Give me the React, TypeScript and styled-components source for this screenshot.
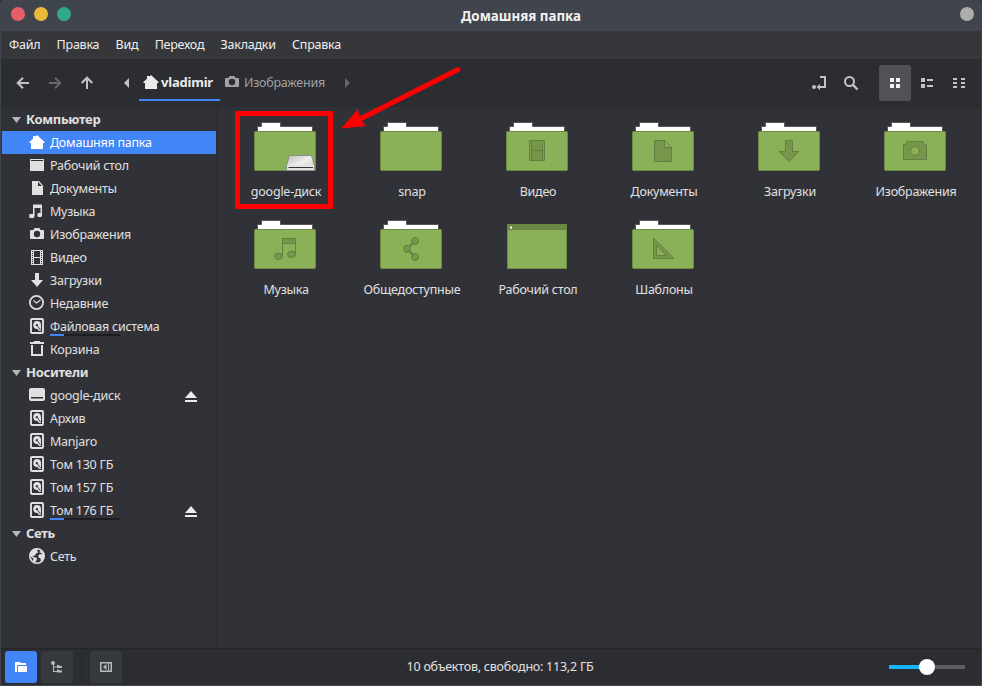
import React from 'react';
import styled, { createGlobalStyle, css } from 'styled-components';

const GlobalStyle = createGlobalStyle`
  * { box-sizing: border-box; }
  html, body { margin: 0; padding: 0; background: #20344f; }
  body { width: 982px; height: 686px; overflow: hidden; }
  svg { display: block; flex: none; }
`;

const Window = styled.div`
  position: relative;
  display: flex;
  flex-direction: column;
  width: 982px;
  height: 686px;
  border: 1px solid #404450;
  border-top: 0;
  border-radius: 4px 4px 0 0;
  overflow: hidden;
  background: #313237;
  color: #e0e0e1;
  font: 12.5px/22px 'Noto Sans', sans-serif;
  letter-spacing: -0.24px;
`;

const TitleBar = styled.header`
  display: flex;
  align-items: center;
  height: 31px;
  flex: none;
  padding: 0 8px 3px 11px;
  margin: 0 -1px;
  background: #40444c;
`;

const Lights = styled.div`
  display: flex;
  gap: 9px;
`;

const Light = styled.i<{ $color: string }>`
  display: block;
  width: 14px;
  height: 14px;
  border-radius: 50%;
  background: ${(p) => p.$color};
`;

const Title = styled.h1`
  flex: 1;
  margin: 3px 0 0;
  padding-left: 11px;
  text-align: center;
  font-size: 13.33px;
  line-height: 22px;
  font-weight: 700;
  letter-spacing: 0;
  color: #f2f2f3;
`;

const MenuBar = styled.nav`
  display: flex;
  align-items: center;
  gap: 16.3px;
  height: 28px;
  flex: none;
  padding: 0 8px 1px;
  background: #36373b;
  color: #eeeeef;
`;

const ToolBar = styled.div`
  display: flex;
  align-items: center;
  height: 48px;
  flex: none;
  padding: 0 6px;
  background: #2c2d32;
  border-bottom: 1px solid #2a2b2f;
`;

const ToolButton = styled.div<{ $active?: boolean; $dim?: boolean }>`
  display: flex;
  align-items: center;
  justify-content: center;
  width: 32px;
  height: 36px;
  border-radius: 3px;
  color: ${(p) => (p.$active ? '#f2f2f2' : p.$dim ? '#66676a' : '#c3c3c5')};
  background: ${(p) => (p.$active ? '#515256' : 'transparent')};
`;

const PathBar = styled.div`
  display: flex;
  align-items: center;
  flex: 1;
  height: 100%;
  padding-left: 21px;
`;

const Crumb = styled.div<{ $current?: boolean }>`
  display: flex;
  align-items: center;
  gap: 4px;
  height: 37px;
  padding: 0 0 1px 4px;
  color: #a0a1a3;
  ${(p) =>
    p.$current
      ? css`
          width: 81px;
          margin: 0 4px 0 10px;
          padding-bottom: 0;
          gap: 2px;
          border-bottom: 2px solid #4285f6;
          color: #eaeaeb;
          font-weight: 700;
          font-size: 13px;
          letter-spacing: -0.2px;
        `
      : css`
          padding-left: 0;
          margin-right: 20px;
          span { margin-top: 2px; }
        `}
`;

const Body = styled.div`
  display: flex;
  flex: 1;
  min-height: 0;
`;

const SideBar = styled.aside`
  width: 217px;
  flex: none;
  padding: 1px 1px 0 1px;
  border-right: 1px solid #242529;
`;

const Section = styled.div`
  display: flex;
  align-items: center;
  gap: 5px;
  height: 23px;
  padding: 0 0 1px 10px;
  font-weight: 700;
  font-size: 13px;
  letter-spacing: -0.3px;
  svg { margin-top: 2px; }
`;

const Place = styled.div<{ $selected?: boolean }>`
  display: flex;
  align-items: center;
  gap: 5px;
  height: 23px;
  padding: 0 19px 1px 27px;
  color: ${(p) => (p.$selected ? '#ffffff' : '#e0e0e1')};
  background: ${(p) => (p.$selected ? '#4285f6' : 'transparent')};
`;

const PlaceName = styled.span`
  position: relative;
  flex: 1;
  margin-top: 2px;
  line-height: 22px;
  white-space: nowrap;
`;

const Usage = styled.i`
  position: absolute;
  left: 0;
  bottom: 2px;
  width: 70px;
  height: 2px;
  background: linear-gradient(90deg, #4285f6 14px, #1d1e21 14px);
`;

const Files = styled.main`
  display: grid;
  grid-template-columns: repeat(6, 126px);
  grid-auto-rows: 98px;
  align-content: start;
  padding: 15px 0 0 5px;
  width: 763px;
`;

const FileItem = styled.div`
  display: flex;
  flex-direction: column;
  align-items: center;
  gap: 9px;
  svg { margin-right: 2px; }
`;

const FileName = styled.span`
  line-height: 23px;
  white-space: nowrap;
`;

const StatusBar = styled.footer`
  display: flex;
  align-items: center;
  height: 37px;
  flex: none;
  padding: 0 16px 0 4px;
  background: #2c2d32;
  border-top: 1px solid #242529;
`;

const StatusButton = styled.div<{ $active?: boolean }>`
  display: flex;
  align-items: center;
  justify-content: center;
  width: 32px;
  height: 32px;
  margin-right: 4px;
  border-radius: 3px;
  background: ${(p) => (p.$active ? '#4285f6' : '#36393e')};
  color: ${(p) => (p.$active ? '#ffffff' : '#b9babc')};
`;

const Divider = styled.i`
  width: 1px;
  height: 32px;
  margin: 0 8px 0 4px;
  background: #26272b;
`;

const StatusText = styled.div`
  flex: 1;
  text-align: center;
  padding: 0 15px 1px 0;
  line-height: 20px;
`;

const Slider = styled.div`
  display: flex;
  align-items: center;
  width: 76px;
  height: 16px;
  background: linear-gradient(90deg, #1bb2fc 38px, #5b5c60 38px) center / 100% 4px no-repeat;
`;

const Knob = styled.i`
  width: 16px;
  height: 16px;
  margin-left: 30px;
  border-radius: 50%;
  background: #ffffff;
`;

const Highlight = styled.div`
  position: absolute;
  left: 234px;
  top: 111px;
  width: 98px;
  height: 98px;
  border: 5px solid #ff0000;
`;

const ArrowSvg = styled.svg`
  position: absolute;
  left: 328px;
  top: 60px;
`;

const EjectSvg = styled.svg`
  margin-top: 2px;
`;

type IconName =
  | 'home' | 'desktop' | 'doc' | 'music' | 'camera' | 'video' | 'download'
  | 'clock' | 'disk' | 'trash' | 'drive' | 'globe';

const iconShapes: Record<IconName, React.ReactNode> = {
  home: <path d="M8 1 15.6 8v1H14v6H2V9H.4V8L4 4.700V2h2.500v.5z" />,
  desktop: <path d="M1 2h14v1H1zM1 4h14v10H1z M1 2h1v3H1zM14 2h1v3h-1z" />,
  doc: <path fillRule="evenodd" d="M3 1h7l4 4.500V15H3zM9 2v4h4z" />,
  music: (
    <>
      <path d="M4 1.500h9V12h-1.500V5h-6v8H4z" />
      <ellipse cx="2.800" cy="13" rx="2.700" ry="2.200" />
      <ellipse cx="10.700" cy="12" rx="2.500" ry="2.200" />
    </>
  ),
  camera: (
    <path fillRule="evenodd" d="M2 4h2.500l1-2h5l1 2H14q1 0 1 1v7q0 1-1 1H2q-1 0-1-1V5q0-1 1-1zM8 4.800a3.200 3.200 0 1 0 0 6.400a3.200 3.200 0 1 0 0-6.400z" />
  ),
  video: (
    <>
      <path fillRule="evenodd" d="M2 1h12v15H2zM5 2v6h6V2zM5 9v6h6V9z" />
      <path d="M3.500 2v13M12.500 2v13" stroke="#313237" strokeDasharray="1 1" fill="none" />
    </>
  ),
  download: <path d="M6 1h4v7h4l-6 7-6-7h4z" />,
  clock: (
    <g fill="none" stroke="currentColor">
      <circle cx="7.500" cy="7.500" r="6.600" strokeWidth="1.800" />
      <path d="m4.500 5.500 3 2.500L11.500 5" strokeWidth="1.200" />
    </g>
  ),
  disk: (
    <>
      <rect x="2" y="1" width="12" height="14" rx="1" fill="none" stroke="currentColor" strokeWidth="1.900" />
      <path fillRule="evenodd" d="M8 3a4 4 0 0 1 4 4v6H10L8.500 11A4 4 0 1 1 8 3zM8 6a1.200 1.200 0 0 0-1 2l1 .3 1-.8A1.200 1.200 0 0 0 8 6z" />
      <path d="m8.500 8 3 4" stroke="#313237" strokeWidth=".9" />
    </>
  ),
  trash: <path fillRule="evenodd" d="M1 1h4V0h6v1h4v2H1zM2 4h12v11H2zM4 4v9h8V4z" />,
  drive: <path fillRule="evenodd" d="M2 1h12q2 0 2 2v9q0 2-2 2H2q-2 0-2-2V3q0-2 2-2zM2 10v1.500h12V10z" />,
  globe: (
    <>
      <circle cx="8" cy="8" r="7.200" fill="none" stroke="currentColor" strokeWidth="1.600" />
      <path d="M1 6 3 2l4-1.500 2 1L8 3l1.500 1.200L7 5.500 6 7.500 3.500 8l2 1.500h2l.5 2-2 3L4 13l.5-2.500L2 9zM11 2.500l3 2L15.500 8 14 12l-2 1.500-.5-3-2-1-.2-2L11 6l2 .5-.5-1.500-2-.5z" />
    </>
  ),
};

const Icon = ({ name, size = 16 }: { name: IconName; size?: number }) => (
  <svg width={size} height={size} viewBox="0 0 16 16" fill="currentColor">
    {iconShapes[name]}
  </svg>
);

const Eject = () => (
  <EjectSvg width="12" height="11" viewBox="0 0 12 11" fill="#ececec">
    <path d="m6 0 6 7H0zM0 9h12v2H0z" />
  </EjectSvg>
);

type FolderKind = 'drive' | 'plain' | 'video' | 'doc' | 'download' | 'camera' | 'music' | 'share' | 'desktop' | 'ruler';

const emblems: Record<FolderKind, React.ReactNode> = {
  plain: null,
  desktop: null,
  drive: (
    <g>
      <path d="M35.500 33.500h22l3 10v4q0 1-1 1H33.500q-1 0-1-1v-4z" fill="url(#metal)" stroke="#8d8d8d" />
      <path d="M33 43.500h27v4.500H33z" fill="#e2e2e2" stroke="none" />
      <path d="M34.500 45.500h24.500" stroke="#333438" />
    </g>
  ),
  video: (
    <>
      <path d="M23.500 18.500h15v20h-15zM25.500 18.500v20M36.500 18.500v20M25.500 28.500h11" />
      <path d="M24.500 20v18M37.500 20v18" stroke="#8ab058" strokeDasharray="1 1" />
    </>
  ),
  doc: (
    <>
      <path d="M22.500 18.500h10l7 7v14h-17z" />
      <path d="M32.500 18.500v7h7z" fill="#8ab058" />
    </>
  ),
  download: <path d="M27.500 18.500h7v11h6.500L31 39.500 21 29.500h6.500z" />,
  camera: (
    <>
      <path d="M19.500 22.500H22l1-3h16l1 3h2.500v15h-23z" />
      <circle cx="31" cy="29" r="4.500" fill="#8ab058" />
    </>
  ),
  music: (
    <>
      <path d="M28.500 18.500h13v5h-13z" />
      <path d="M28.500 36V18.500h13V34" fill="none" />
      <ellipse cx="24.500" cy="36.300" rx="4" ry="3.200" />
      <ellipse cx="37.500" cy="34.300" rx="4" ry="3.200" />
    </>
  ),
  share: (
    <>
      <path d="M35 21 27 29l8 8" fill="none" strokeWidth="2" />
      <circle cx="35" cy="21" r="3.500" />
      <circle cx="27" cy="28.800" r="3.500" />
      <circle cx="35" cy="37" r="3.500" />
    </>
  ),
  ruler: <path fillRule="evenodd" d="M21.500 18v20.500H42zM24.500 25.500v10h10z" />,
};

const Folder = ({ kind }: { kind: FolderKind }) => (
  <svg width="62" height="49" viewBox="0 0 62 49">
    <defs>
      <linearGradient id="metal" x1="0" y1="0" x2="1" y2="1">
        <stop offset="0" stopColor="#bdbdbd" />
        <stop offset=".5" stopColor="#eeeeee" />
        <stop offset="1" stopColor="#c8c8c8" />
      </linearGradient>
    </defs>
    {kind === 'desktop' ? (
      <>
        <rect x="1.500" y="4.500" width="59" height="44" fill="#8ab058" stroke="#6c8a45" />
        <path d="M1 4h60v6H1z" fill="#6a8843" />
        <path d="M4 6.500h2v2H4z" fill="#fff" />
      </>
    ) : (
      <>
        <path d="M3.500 9V4.500h4v-4h19v4h32V9" fill="#fff" stroke="#56575b" />
        <path d="M4 9V5h4V1h18v4h32v4z" fill="#fff" />
        <rect x=".5" y="9.500" width="61" height="39" rx="1" fill="#8ab058" stroke="#6c8a45" />
        <g fill="#76964b" stroke="#647f40">{emblems[kind]}</g>
      </>
    )}
  </svg>
);

type PlaceData = { icon: IconName; name: string; selected?: boolean; usage?: boolean; eject?: boolean };

const sections: { title: string; places: PlaceData[] }[] = [
  {
    title: 'Компьютер',
    places: [
      { icon: 'home', name: 'Домашняя папка', selected: true },
      { icon: 'desktop', name: 'Рабочий стол' },
      { icon: 'doc', name: 'Документы' },
      { icon: 'music', name: 'Музыка' },
      { icon: 'camera', name: 'Изображения' },
      { icon: 'video', name: 'Видео' },
      { icon: 'download', name: 'Загрузки' },
      { icon: 'clock', name: 'Недавние' },
      { icon: 'disk', name: 'Файловая система', usage: true },
      { icon: 'trash', name: 'Корзина' },
    ],
  },
  {
    title: 'Носители',
    places: [
      { icon: 'drive', name: 'google-диск', eject: true },
      { icon: 'disk', name: 'Архив' },
      { icon: 'disk', name: 'Manjaro' },
      { icon: 'disk', name: 'Том 130 ГБ' },
      { icon: 'disk', name: 'Том 157 ГБ' },
      { icon: 'disk', name: 'Том 176 ГБ', usage: true, eject: true },
    ],
  },
  { title: 'Сеть', places: [{ icon: 'globe', name: 'Сеть' }] },
];

const files: { name: string; kind: FolderKind }[] = [
  { name: 'google-диск', kind: 'drive' },
  { name: 'snap', kind: 'plain' },
  { name: 'Видео', kind: 'video' },
  { name: 'Документы', kind: 'doc' },
  { name: 'Загрузки', kind: 'download' },
  { name: 'Изображения', kind: 'camera' },
  { name: 'Музыка', kind: 'music' },
  { name: 'Общедоступные', kind: 'share' },
  { name: 'Рабочий стол', kind: 'desktop' },
  { name: 'Шаблоны', kind: 'ruler' },
];

const menus = ['Файл', 'Правка', 'Вид', 'Переход', 'Закладки', 'Справка'];

const Glyph = ({ d, stroke }: { d: string; stroke?: number }) => (
  <svg
    width="16"
    height="16"
    viewBox="0 0 16 16"
    fill={stroke ? 'none' : 'currentColor'}
    fillRule="evenodd"
    stroke={stroke ? 'currentColor' : 'none'}
    strokeWidth={stroke}
  >
    <path d={d} />
  </svg>
);

export default function App() {
  return (
    <>
      <GlobalStyle />
      <Window>
        <TitleBar>
          <Lights>
            <Light $color="#e85e66" />
            <Light $color="#ebb93a" />
            <Light $color="#2fa88c" />
          </Lights>
          <Title>Домашняя папка</Title>
          <Light $color="#adadad" />
        </TitleBar>
        <MenuBar>
          {menus.map((m) => (
            <span key={m}>{m}</span>
          ))}
        </MenuBar>
        <ToolBar>
          <ToolButton><Glyph stroke={2} d="M14 8H3M8 2.700 2.700 8 8 13.300" /></ToolButton>
          <ToolButton $dim><Glyph stroke={2} d="M2 8h11M8 2.700 13.300 8 8 13.300" /></ToolButton>
          <ToolButton><Glyph stroke={2} d="M8 14V3M2.700 8 8 2.700 13.300 8" /></ToolButton>
          <PathBar>
            <svg width="5" height="10" viewBox="0 0 5 10"><path d="M5 0v10L0 5z" fill="#c3c3c5" /></svg>
            <Crumb $current>
              <Icon name="home" />
              <span>vladimir</span>
            </Crumb>
            <Crumb>
              <Icon name="camera" />
              <span>Изображения</span>
            </Crumb>
            <svg width="5" height="10" viewBox="0 0 5 10"><path d="M0 0v10l5-5z" fill="#66676a" /></svg>
          </PathBar>
          <ToolButton>
            <svg width="16" height="16" viewBox="0 0 16 16" fill="currentColor">
              <path d="M9 1h6v12H9v2l-3.500-3L9 9v2h4V3H9z" />
              <circle cx="3" cy="12" r="2" />
            </svg>
          </ToolButton>
          <ToolButton>
            <svg width="16" height="16" viewBox="0 0 16 16" fill="none" stroke="currentColor" strokeWidth="2">
              <circle cx="6.500" cy="6.500" r="4.500" />
              <path d="m10 10 4.500 4.500" strokeWidth="2.400" />
            </svg>
          </ToolButton>
          <svg width="12" height="1" />
          <ToolButton $active><Glyph d="M3 3h4v4H3zM9 3h4v4H9zM3 9h4v4H3zM9 9h4v4H9z" /></ToolButton>
          <ToolButton><Glyph d="M2 3h4v4H2zM8 4h6v2H8zM2 9h4v4H2zM8 10h6v2H8z" /></ToolButton>
          <ToolButton><Glyph d="M2 3h4v2H2zM10 3h4v2h-4zM2 7h4v2H2zM10 7h4v2h-4zM2 11h4v2H2zM10 11h4v2h-4z" /></ToolButton>
        </ToolBar>
        <Body>
          <SideBar>
            {sections.map((s) => (
              <React.Fragment key={s.title}>
                <Section>
                  <svg width="9" height="6" viewBox="0 0 9 6"><path d="M0 0h9L4.500 6z" fill="#b6b6b8" /></svg>
                  {s.title}
                </Section>
                {s.places.map((p) => (
                  <Place key={p.name} $selected={p.selected}>
                    <Icon name={p.icon} />
                    <PlaceName>
                      {p.name}
                      {p.usage && <Usage />}
                    </PlaceName>
                    {p.eject && <Eject />}
                  </Place>
                ))}
              </React.Fragment>
            ))}
          </SideBar>
          <Files>
            {files.map((f) => (
              <FileItem key={f.name}>
                <Folder kind={f.kind} />
                <FileName>{f.name}</FileName>
              </FileItem>
            ))}
          </Files>
        </Body>
        <StatusBar>
          <StatusButton $active>
            <Glyph d="M2 3h5l1 1h5v2H4v7H2zM5 7h9v6H5z" />
          </StatusButton>
          <StatusButton>
            <svg width="16" height="16" viewBox="0 0 16 16" fill="currentColor">
              <circle cx="4" cy="4" r="2" />
              <path d="M4 4h1v8h3v1H4zM5 7.500h3v1H5zM8 6h2l1 1h2v2H8zM8 10.500h2l1 1h2v2H8z" />
            </svg>
          </StatusButton>
          <Divider />
          <StatusButton>
            <Glyph d="M2 3h12v10H2zM3.500 4.500v7h9v-7zM8.500 5v6l-3.500-3zM10 4.500h1v7h-1z" />
          </StatusButton>
          <StatusText>10 объектов, свободно: 113,2 ГБ</StatusText>
          <Slider><Knob /></Slider>
        </StatusBar>
        <Highlight />
        <ArrowSvg width="140" height="80" viewBox="0 0 140 80">
          <path d="M129 9.500 31 59" stroke="#f00" strokeWidth="5" strokeLinecap="round" />
          <path d="M12 68.500 29 49l2 10 6 7z" fill="#f00" />
        </ArrowSvg>
      </Window>
    </>
  );
}
